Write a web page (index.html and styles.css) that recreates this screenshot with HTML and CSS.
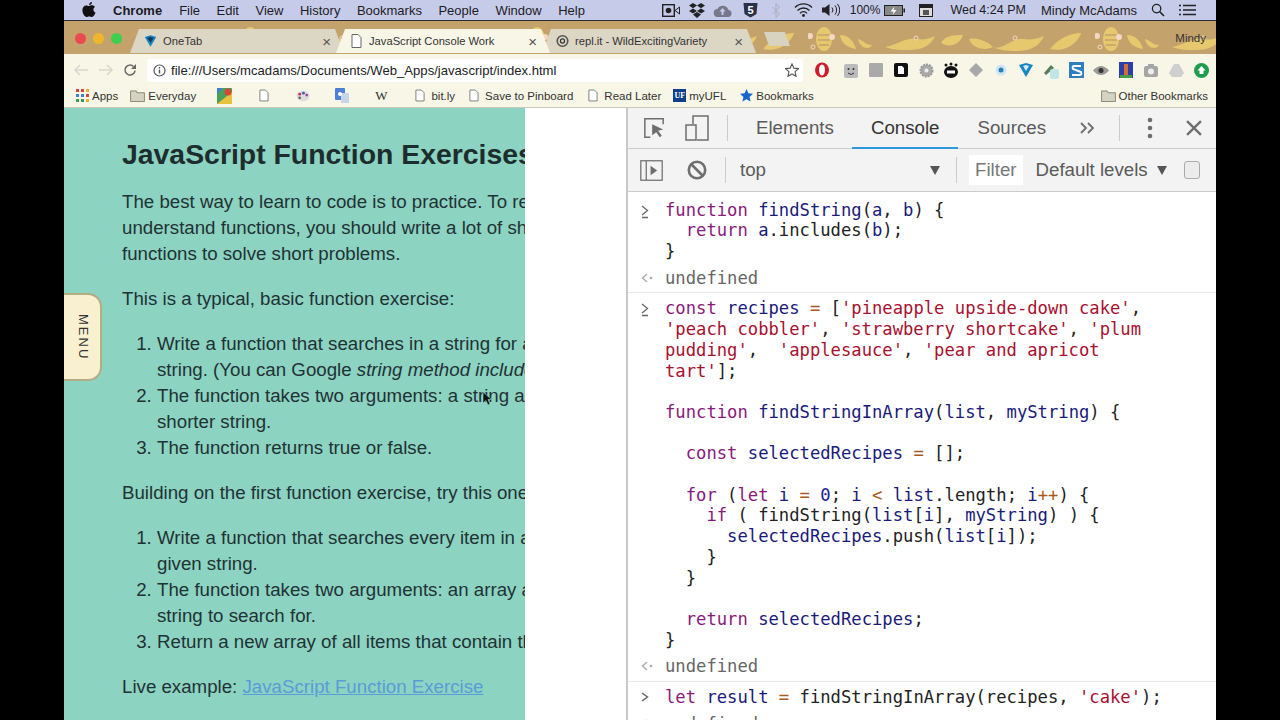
FILE: index.html
```html
<!DOCTYPE html>
<html lang="en">
<head>
  <meta charset="UTF-8" />
  <title>JavaScript Console Work</title>
  <link rel="stylesheet" href="styles.css">
</head>
<body>
<div class="screen">

  <!-- mac menu bar -->
  <div class="menubar">
    <svg class="apple" width="14" height="16" viewBox="0 0 14 16"><path d="M10 0c.1 1.200-.9 2.900-2.900 3.100C6.900 1.500 8.300.2 10 0zM7 4c.8 0 1.700-.7 3-.7 1.100 0 2.300.5 3 1.600-2.300 1.300-2 4.600.6 5.600-.7 1.800-2.200 4.500-3.700 4.500-1 0-1.400-.6-2.700-.6s-1.700.6-2.700.6C2.700 15 .4 11.500.4 8.300.4 5.300 2.300 3.400 4.200 3.400 5.300 3.400 6.200 4 7 4z" fill="#111"/></svg>
    <span class="menu-item menu-app">Chrome</span>
    <span class="menu-item">File</span>
    <span class="menu-item">Edit</span>
    <span class="menu-item">View</span>
    <span class="menu-item">History</span>
    <span class="menu-item">Bookmarks</span>
    <span class="menu-item">People</span>
    <span class="menu-item">Window</span>
    <span class="menu-item">Help</span>
    <div class="menu-right">
      <svg width="18" height="13" viewBox="0 0 18 13"><rect x=".7" y=".7" width="11.600" height="11.600" fill="none" stroke="#222" stroke-width="1.400"/><circle cx="6.500" cy="6.500" r="2.800" fill="#222"/><path d="M13 6.500l4.500-3.500v7z" fill="none" stroke="#222"/></svg>
      <svg class="mr-dropbox" width="16" height="15" viewBox="0 0 16 15"><path d="M4 0l4 2.600L4 5.200 0 2.600zM12 0l4 2.600-4 2.600-4-2.600zM4 5.400L8 8l-4 2.600L0 8zM12 5.400L16 8l-4 2.600L8 8zM4 11.400l4-2.400 4 2.400L8 15z" fill="#222"/></svg>
      <svg class="mr-cloud" width="19" height="13" viewBox="0 0 19 13"><path d="M5 13a4 4 0 0 1-.5-8A6 6 0 0 1 15.500 6a3.500 3.500 0 0 1-1 7z" fill="#77798a"/><path d="M9.500 4l3 3.500h-2V11h-2V7.500h-2z" fill="#c6cbea"/></svg>
      <svg class="mr-shield" width="15" height="16" viewBox="0 0 15 16"><path d="M.5 1h14l-1 11-6 3.500-6-3.500z" fill="#2a3148"/><text x="7.500" y="11.500" class="tiny-five">5</text></svg>
      <svg class="mr-bt" width="8" height="15" viewBox="0 0 8 15"><path d="M.5 4l7 7-3.500 3.500V.5L7.500 4l-7 7" fill="none" stroke="#a8abc0"/></svg>
      <svg class="mr-wifi" width="19" height="14" viewBox="0 0 19 14"><path d="M1 4.500a12 12 0 0 1 17 0M3.500 7.500a8.500 8.500 0 0 1 12 0M6 10.300a4.500 4.500 0 0 1 7 0" fill="none" stroke="#222" stroke-width="1.300"/><circle cx="9.500" cy="12.500" r="1.400" fill="#222"/></svg>
      <svg class="mr-vol" width="18" height="14" viewBox="0 0 18 14"><path d="M0 4.500h3l4.500-3.500v12L3 9.500H0z" fill="#222"/><path d="M10 4.500a4 4 0 0 1 0 5M13 2.500a7 7 0 0 1 0 9M15.500 1a10 10 0 0 1 0 12" fill="none" stroke="#222"/></svg>
      <span class="menu-batt">100%</span>
      <svg class="mr-batt" width="21" height="11" viewBox="0 0 21 11"><rect x=".5" y=".5" width="18" height="10" fill="#888" stroke="#222"/><path d="M10.500 1.500l-4 5h3l-1 3.500 4-5h-3z" fill="#fff"/><rect x="19.500" y="3.500" width="1.500" height="4" fill="#222"/></svg>
      <svg class="mr-kbd" width="14" height="13" viewBox="0 0 14 13"><rect x=".5" y=".5" width="13" height="12" fill="#ddd" stroke="#222"/><rect x="1" y="1" width="12" height="3" fill="#222"/><rect x="4" y="6" width="6" height="5" fill="#555"/></svg>
      <span class="menu-clock">Wed 4:24 PM</span>
      <span class="menu-user">Mindy McAdams</span>
      <svg class="mr-search" width="14" height="14" viewBox="0 0 15 15"><circle cx="6" cy="6" r="4.500" fill="none" stroke="#222" stroke-width="1.400"/><path d="M9.500 9.500l4.500 4.500" stroke="#222" stroke-width="1.600"/></svg>
      <svg class="mr-list" width="17" height="12" viewBox="0 0 17 12"><path d="M4 1.500h13M4 6h13M4 10.500h13" stroke="#222" stroke-width="1.500"/><path d="M0 1.500h2M0 6h2M0 10.500h2" stroke="#222" stroke-width="1.500"/></svg>
    </div>
  </div>

  <!-- browser chrome -->
  <div class="tabstrip">
    <svg class="theme" width="1152" height="33">
      <defs>
        <pattern id="swirl" width="287" height="33" patternUnits="userSpaceOnUse" x="170">
          <ellipse cx="16" cy="18" rx="8" ry="12" fill="#e6c86e"/>
          <path d="M10 14h12M10 19h12M11 24h10" stroke="#c4a26c" stroke-width="1.500"/>
          <path d="M32 14c8 0 14 6 16 14-8-1-15-6-16-14zM50 18c6 2 8 6 14 6-2 5-12 4-14-6zM77 26c12-2 20-10 32-8 6 1 12 0 18-3-4 10-14 14-26 14-8 0-16 0-24-3zM133 22c4-8 14-8 22-8-2 8-12 14-22 8zM161 18c8-2 18 2 24 8-8 4-20 2-24-8zM185 26c10 4 20-10 30-8 8 1 14 0 21-3-4 10-14 15-27 15-10 0-18-1-24-4zM242 28c8-10 20-16 31-16-2 8-14 20-31 16z" fill="#e6c86e"/>
          <circle cx="2" cy="15" r="3" fill="#f3d6c4"/>
          <circle cx="24" cy="16" r="3" fill="#f3d6c4"/>
          <circle cx="5" cy="26" r="2" fill="#c4a26c" stroke="#f3d6c4"/>
          <circle cx="108" cy="17" r="2" fill="#c4a26c" stroke="#f3d6c4"/>
          <circle cx="207" cy="17" r="2" fill="#c4a26c" stroke="#f3d6c4"/>
        </pattern>
      </defs>
      <rect width="1152" height="33" fill="#c4a26c"/>
      <rect x="110" width="1042" height="33" fill="url(#swirl)"/>
    </svg>
    <div class="lights">
      <span class="light light-red"></span>
      <span class="light light-yellow"></span>
      <span class="light light-green"></span>
    </div>
    <div class="tabs">
      <div class="tab">
        <svg class="tab-icon" width="13" height="14" viewBox="0 0 16 16"><path d="M1 3l7-2 7 2-7 12z" fill="#1685c4"/><path d="M4 4l4-1 4 1-4 6z" fill="#0e3a5c"/></svg>
        <span class="tab-title">OneTab</span>
        <span class="tab-close">×</span>
      </div>
      <div class="tab tab-active">
        <svg class="tab-icon" width="13" height="14" viewBox="0 0 12 14"><path d="M1.500.5h6l3 3v10h-9z" fill="#fff" stroke="#666"/></svg>
        <span class="tab-title">JavaScript Console Work</span>
        <span class="tab-close">×</span>
      </div>
      <div class="tab">
        <svg class="tab-icon" width="13" height="14" viewBox="0 0 16 16"><circle cx="8" cy="8" r="6.500" fill="none" stroke="#555" stroke-width="2"/><circle cx="8" cy="8" r="2.500" fill="none" stroke="#333" stroke-width="1.500"/></svg>
        <span class="tab-title">repl.it - WildExcitingVariety</span>
        <span class="tab-close">×</span>
      </div>
      <div class="tab-new"></div>
    </div>
    <span class="profile">Mindy</span>
  </div>

  <div class="toolbar">
    <svg class="nav-arrow" width="16" height="14" viewBox="0 0 16 14"><path d="M15 7H2M7 2L2 7l5 5" fill="none" stroke="#d8d8d0" stroke-width="1.600"/></svg>
    <svg class="nav-arrow" width="16" height="14" viewBox="0 0 16 14"><path d="M1 7h13M9 2l5 5-5 5" fill="none" stroke="#d8d8d0" stroke-width="1.600"/></svg>
    <svg class="nav-reload" width="14" height="14" viewBox="0 0 14 14"><path d="M12 7.500A5 5 0 1 1 10.500 3.500" fill="none" stroke="#666" stroke-width="1.500"/><path d="M13 1v5H8z" fill="#666"/></svg>
    <div class="omnibox">
      <svg width="13" height="13" viewBox="0 0 13 13"><circle cx="6.500" cy="6.500" r="5.500" fill="none" stroke="#555" stroke-width="1.200"/><path d="M6.500 5.500v4M6.500 3v1.400" stroke="#555" stroke-width="1.400"/></svg>
      <span class="url">file:///Users/mcadams/Documents/Web_Apps/javascript/index.html</span>
      <svg class="url-star" width="14" height="14" viewBox="0 0 15 15"><path d="M7.500 1l2 4.500 5 .5-3.700 3.300 1 4.900-4.300-2.500-4.300 2.500 1-4.900L.5 6l5-.5z" fill="none" stroke="#555" stroke-width="1.200"/></svg>
    </div>
    <div class="extensions">
      <svg width="16" height="16" viewBox="0 0 16 16"><ellipse cx="8" cy="8" rx="7" ry="7.500" fill="#d01c28"/><ellipse cx="8" cy="8" rx="3" ry="5.500" fill="#fff"/></svg>
      <svg width="14" height="16" viewBox="0 0 14 16"><rect y="2" width="14" height="14" rx="2" fill="#bbb"/><circle cx="4.500" cy="7" r="1" fill="#333"/><circle cx="9.500" cy="7" r="1" fill="#333"/><path d="M4 11q3 3 6 0" fill="none" stroke="#333"/></svg>
      <svg width="14" height="14" viewBox="0 0 14 14"><rect width="14" height="14" rx="1" fill="#aaa"/></svg>
      <svg width="14" height="14" viewBox="0 0 14 14"><rect width="14" height="14" rx="2" fill="#111"/><path d="M4 3h4l2 2v6H4z" fill="#fff"/></svg>
      <svg width="15" height="15" viewBox="0 0 15 15"><circle cx="7.500" cy="7.500" r="6" fill="#aaa" stroke="#999" stroke-width="2" stroke-dasharray="2 1"/><circle cx="7.500" cy="7.500" r="2" fill="#eee"/></svg>
      <svg width="16" height="16" viewBox="0 0 16 16"><ellipse cx="8" cy="10" rx="7" ry="6" fill="#111"/><circle cx="3" cy="3" r="1.500" fill="#111"/><circle cx="8" cy="2" r="1.500" fill="#111"/><circle cx="13" cy="3" r="1.500" fill="#111"/><rect x="4" y="8.500" width="8" height="3" fill="#fff"/></svg>
      <svg width="14" height="14" viewBox="0 0 14 14"><path d="M7 0l7 7-7 7-7-7z" fill="#a8a8a8"/></svg>
      <svg width="12" height="12" viewBox="0 0 12 12"><circle cx="6" cy="6" r="5.500" fill="#cfe6f4"/><circle cx="6" cy="6" r="2.500" fill="#2a7fb8"/></svg>
      <svg width="14" height="14" viewBox="0 0 14 14"><path d="M0 2l7-2 7 2-7 12z" fill="#1685c4"/><path d="M4 3l3-1 3 1-3 5z" fill="#d8ecf6"/></svg>
      <svg width="16" height="18" viewBox="0 0 16 18"><path d="M1 12l7-8 3 3-8 7z" fill="#5a7a5c"/><rect x="7" y="8" width="9" height="10" rx="2" fill="#bfe6e4"/></svg>
      <svg width="15" height="16" viewBox="0 0 15 16"><rect width="15" height="16" fill="#2d7fc0"/><path d="M12 4H5q-2 0-1 3l8 3q1 3-1 3H3" fill="none" stroke="#fff" stroke-width="2"/></svg>
      <svg width="16" height="11" viewBox="0 0 16 11"><path d="M0 5.500q8-9 16 0-8 9-16 0z" fill="#999"/><circle cx="8" cy="5.500" r="2.500" fill="#333"/></svg>
      <svg width="14" height="16" viewBox="0 0 14 16"><rect width="14" height="16" fill="#2b3fa8"/><rect x="5" y="2" width="4" height="11" fill="#d86a3a"/><rect x="1" y="13" width="12" height="3" fill="#4a9a4a"/></svg>
      <svg width="14" height="13" viewBox="0 0 14 13"><rect y="2" width="14" height="11" rx="2" fill="#a5a5a5"/><rect x="4" width="6" height="3" fill="#a5a5a5"/><circle cx="7" cy="7.500" r="3" fill="#eee"/></svg>
      <svg width="15" height="13" viewBox="0 0 15 13"><path d="M5 0h5l5 9-3 4H3L0 9z" fill="#cfcfcf"/></svg>
      <svg width="15" height="15" viewBox="0 0 15 15"><circle cx="7.500" cy="7.500" r="7.500" fill="#1f9d4d"/><path d="M7.500 3l4 4.500H9.500V11h-4V7.500h-2z" fill="#fff"/></svg>
    </div>
  </div>

  <div class="bookmarks">
    <div class="bm bm-apps">
      <svg width="13" height="13" viewBox="0 0 13 13"><g fill="#d4483c"><rect width="3" height="3"/><rect x="5" width="3" height="3"/></g><rect x="10" width="3" height="3" fill="#e8b030"/><g fill="#3f7fd0"><rect y="5" width="3" height="3"/><rect x="5" y="5" width="3" height="3"/></g><rect x="10" y="5" width="3" height="3" fill="#d4483c"/><g fill="#3a9a58"><rect y="10" width="3" height="3"/><rect x="5" y="10" width="3" height="3"/></g><rect x="10" y="10" width="3" height="3" fill="#e8b030"/></svg>
      <span>Apps</span>
    </div>
    <div class="bm bm-everyday">
      <svg class="folder" width="15" height="12" viewBox="0 0 16 13"><path d="M.5 12.500V1h6l1 2h8v9.500z" fill="#d4d2c2" stroke="#85826e"/></svg>
      <span>Everyday</span>
    </div>
    <svg class="bm-solo bm-maps" width="15" height="16" viewBox="0 0 15 16"><rect width="15" height="16" rx="1" fill="#4aa05a"/><path d="M0 16L15 4v12z" fill="#e8c23c"/><path d="M0 0h6L0 6z" fill="#3f7fd0"/><circle cx="11" cy="4" r="3.500" fill="#d4483c"/></svg>
    <svg class="bm-solo bm-doc-a" width="10" height="13" viewBox="0 0 11 13"><path d="M1 .5h6l3 3v9H1z" fill="#fff" stroke="#777"/></svg>
    <svg class="bm-solo bm-palette" width="14" height="12" viewBox="0 0 15 12"><ellipse cx="7.500" cy="6" rx="7" ry="5.500" fill="#ddd"/><circle cx="4" cy="4" r="1.500" fill="#c03838"/><circle cx="8" cy="3" r="1.500" fill="#3a5ab0"/><circle cx="11.500" cy="5" r="1.500" fill="#a040a0"/><circle cx="4" cy="8" r="1.500" fill="#666"/></svg>
    <svg class="bm-solo bm-translate" width="14" height="15" viewBox="0 0 14 15"><rect width="10" height="12" rx="1" fill="#4a80d8"/><rect x="6" y="5" width="8" height="10" fill="#c8d4e8"/><circle cx="5" cy="6" r="2" fill="#fff"/></svg>
    <span class="bm-solo bm-wiki">W</span>
    <div class="bm bm-bitly">
      <svg class="doc" width="10" height="13" viewBox="0 0 11 13"><path d="M1 .5h6l3 3v9H1z" fill="#fff" stroke="#777"/></svg>
      <span>bit.ly</span>
    </div>
    <div class="bm bm-pinboard">
      <svg class="doc" width="10" height="13" viewBox="0 0 11 13"><path d="M1 .5h6l3 3v9H1z" fill="#fff" stroke="#777"/></svg>
      <span>Save to Pinboard</span>
    </div>
    <div class="bm bm-later">
      <svg class="doc" width="10" height="13" viewBox="0 0 11 13"><path d="M1 .5h6l3 3v9H1z" fill="#fff" stroke="#777"/></svg>
      <span>Read Later</span>
    </div>
    <div class="bm bm-ufl">
      <span class="uf-badge">UF</span>
      <span>myUFL</span>
    </div>
    <div class="bm bm-star">
      <svg width="13" height="13" viewBox="0 0 15 15"><path d="M7.500 0l2.200 5 5.300.5-4 3.600 1.200 5.400-4.700-2.800-4.700 2.800 1.200-5.400-4-3.600L5.300 5z" fill="#1a66d0"/></svg>
      <span>Bookmarks</span>
    </div>
    <div class="bm bm-other">
      <svg class="folder" width="15" height="12" viewBox="0 0 16 13"><path d="M.5 12.500V1h6l1 2h8v9.500z" fill="#d4d2c2" stroke="#85826e"/></svg>
      <span>Other Bookmarks</span>
    </div>
  </div>

  <div class="viewport">
    <!-- the page, cut off by the open devtools -->
    <div class="page-area">
      <div class="page">
        <div class="menu-tab"><span>MENU</span></div>
        <div class="article">
          <h1>JavaScript Function Exercises</h1>
          <p>The best way to learn to code is to practice. To really<br>understand functions, you should write a lot of short<br>functions to solve short problems.</p>
          <p>This is a typical, basic function exercise:</p>
          <ol>
            <li>Write a function that searches in a string for a shorter<br>string. (You can Google <em>string method includes</em>.)</li>
            <li>The function takes two arguments: a string and a<br>shorter string.</li>
            <li>The function returns true or false.</li>
          </ol>
          <p>Building on the first function exercise, try this one:</p>
          <ol>
            <li>Write a function that searches every item in an array for a<br>given string.</li>
            <li>The function takes two arguments: an array and a<br>string to search for.</li>
            <li>Return a new array of all items that contain the string.</li>
          </ol>
          <p>Live example: <a href="#">JavaScript Function Exercise</a></p>
        </div>
      </div>
      <svg class="cursor" width="10" height="15" viewBox="0 0 10 15"><path d="M1 1v11l3-2.500 2 4.500 2-1-2-4.500h3.500z" fill="#111" stroke="#8cd3c1" stroke-width=".6"/></svg>
    </div>

    <div class="devtools">
      <div class="dt-tabs">
        <svg class="dt-inspect" width="22" height="22" viewBox="0 0 24 24"><path d="M8 22H2V2h20v6" fill="none" stroke="#6e6e6e" stroke-width="1.600"/><path d="M10 8l12 5.500-5.500 1.500 4 5.500-2.200 1.500-3.800-5.500-4.500 3.300z" fill="#6e6e6e"/></svg>
        <svg class="dt-device" width="24" height="26" viewBox="0 0 24 26"><path d="M8 9V1h15v24H12" fill="none" stroke="#6e6e6e" stroke-width="1.500"/><rect x="1" y="10" width="10" height="15" fill="none" stroke="#6e6e6e" stroke-width="1.500"/></svg>
        <span class="dt-sep dt-sep-first"></span>
        <span class="dt-tab">Elements</span>
        <span class="dt-tab dt-tab-active">Console</span>
        <span class="dt-tab dt-tab-last">Sources</span>
        <svg class="dt-more" width="14" height="12" viewBox="0 0 14 12"><path d="M1 1l5 5-5 5M8 1l5 5-5 5" fill="none" stroke="#6e6e6e" stroke-width="1.800"/></svg>
        <span class="dt-sep dt-sep-more"></span>
        <svg class="dt-dots" width="6" height="22" viewBox="0 0 6 22"><circle cx="3" cy="3" r="2.300" fill="#6e6e6e"/><circle cx="3" cy="11" r="2.300" fill="#6e6e6e"/><circle cx="3" cy="19" r="2.300" fill="#6e6e6e"/></svg>
        <svg class="dt-close" width="16" height="16" viewBox="0 0 15 15"><path d="M1 1l13 13M14 1L1 14" stroke="#6e6e6e" stroke-width="2.200"/></svg>
      </div>
      <div class="dt-bar">
        <svg class="dt-sidebar" width="23" height="21" viewBox="0 0 24 22"><rect x=".8" y=".8" width="22.400" height="20.400" fill="none" stroke="#6e6e6e" stroke-width="1.300"/><path d="M6.500 1v20" stroke="#6e6e6e" stroke-width="1.300"/><path d="M11 6l7 5-7 5z" fill="#6e6e6e"/></svg>
        <svg class="dt-clear" width="20" height="20" viewBox="0 0 20 20"><circle cx="10" cy="10" r="8.200" fill="none" stroke="#6e6e6e" stroke-width="2.600"/><path d="M4 4l12 12" stroke="#6e6e6e" stroke-width="2.600"/></svg>
        <span class="dt-sep dt-sep-bar"></span>
        <span class="dt-context">top</span>
        <span class="dt-caret"></span>
        <span class="dt-sep dt-sep-filter"></span>
        <span class="dt-filter">Filter</span>
        <span class="dt-levels">Default levels</span>
        <span class="dt-caret"></span>
        <span class="dt-check"></span>
      </div>
      <div class="console">
        <div class="msg msg-first">
          <span class="prompt"><svg width="8" height="14" viewBox="0 0 8 14"><path d="M1 1l5.500 4.500L1 10M1 12.500h6" fill="none" stroke="#666" stroke-width="1.300"/></svg></span>
<pre><span class="kw">function</span> <span class="def">findString</span>(<span class="def">a</span>, <span class="def">b</span>) {
  <span class="kw">return</span> <span class="def">a</span>.includes(<span class="def">b</span>);
}</pre>
        </div>
        <div class="msg msg-result">
          <span class="prompt"><svg width="12" height="10" viewBox="0 0 12 10"><path d="M6 1L1.500 5 6 9" fill="none" stroke="#aaa" stroke-width="1.400"/><circle cx="10" cy="5" r="1.300" fill="#aaa"/></svg></span>
          <pre class="undef">undefined</pre>
        </div>
        <div class="msg">
          <span class="prompt"><svg width="8" height="14" viewBox="0 0 8 14"><path d="M1 1l5.500 4.500L1 10M1 12.500h6" fill="none" stroke="#666" stroke-width="1.300"/></svg></span>
<pre><span class="kw">const</span> <span class="def">recipes</span> <span class="op">=</span> [<span class="str">'pineapple upside-down cake'</span>,
<span class="str">'peach cobbler'</span>, <span class="str">'strawberry shortcake'</span>, <span class="str">'plum
pudding'</span>,  <span class="str">'applesauce'</span>, <span class="str">'pear and apricot
tart'</span>];

<span class="kw">function</span> <span class="def">findStringInArray</span>(<span class="def">list</span>, <span class="def">myString</span>) {

  <span class="kw">const</span> <span class="def">selectedRecipes</span> <span class="op">=</span> [];

  <span class="kw">for</span> (<span class="kw">let</span> <span class="def">i</span> <span class="op">=</span> <span class="num">0</span>; <span class="def">i</span> <span class="op">&lt;</span> <span class="def">list</span>.length; <span class="def">i</span><span class="op">++</span>) {
    <span class="kw">if</span> ( findString(<span class="def">list</span>[<span class="def">i</span>], <span class="def">myString</span>) ) {
      <span class="def">selectedRecipes</span>.push(<span class="def">list</span>[<span class="def">i</span>]);
    }
  }

  <span class="kw">return</span> <span class="def">selectedRecipes</span>;
}</pre>
        </div>
        <div class="msg msg-result">
          <span class="prompt"><svg width="12" height="10" viewBox="0 0 12 10"><path d="M6 1L1.500 5 6 9" fill="none" stroke="#aaa" stroke-width="1.400"/><circle cx="10" cy="5" r="1.300" fill="#aaa"/></svg></span>
          <pre class="undef">undefined</pre>
        </div>
        <div class="msg">
          <span class="prompt"><svg width="8" height="10" viewBox="0 0 8 10"><path d="M1 1l5.500 4L1 9" fill="none" stroke="#666" stroke-width="1.500"/></svg></span>
<pre><span class="kw">let</span> <span class="def">result</span> <span class="op">=</span> findStringInArray(recipes, <span class="str">'cake'</span>);</pre>
        </div>
        <div class="msg msg-result">
          <span class="prompt"><svg width="12" height="10" viewBox="0 0 12 10"><path d="M6 1L1.500 5 6 9" fill="none" stroke="#aaa" stroke-width="1.400"/><circle cx="10" cy="5" r="1.300" fill="#aaa"/></svg></span>
          <pre class="undef">undefined</pre>
        </div>
      </div>
    </div>
  </div>
</div>
</body>
</html>
```
FILE: styles.css
```css
html, body {
  margin: 0;
  height: 100%;
  background: #000;
  overflow: hidden;
}

.screen {
  width: 1152px;
  height: 720px;
  margin-left: 64px;
  display: flex;
  flex-direction: column;
  overflow: hidden;
  font-family: "Liberation Sans", sans-serif;
  background: #fff;
}

/* menu bar */
.menubar {
  height: 20px;
  flex: none;
  display: flex;
  align-items: center;
  padding-left: 18px;
  background: #c6cbea;
  font-size: 13px;
  color: #1c1c24;
}
.apple { margin-right: 17px; }
.menu-item { margin-right: 16.500px; }
.menu-app { font-weight: bold; margin-right: 17px; }
.menu-right {
  margin-left: auto;
  margin-right: 20px;
  display: flex;
  align-items: center;
}
.menu-right svg { flex: none; }
.mr-dropbox { margin-left: 9px; }
.mr-cloud { margin-left: 8px; }
.mr-shield { margin-left: 11px; }
.mr-bt { margin-left: 14px; }
.mr-wifi { margin-left: 14px; }
.mr-vol { margin-left: 9px; }
.mr-batt { margin-left: 4px; }
.mr-kbd { margin-left: 14px; }
.mr-search { margin-left: 14px; }
.mr-list { margin-left: 14px; }
.tiny-five { font: bold 11px "Liberation Sans", sans-serif; fill: #fff; text-anchor: middle; }
.menu-batt { font-size: 12px; margin-left: 10px; }
.menu-clock { font-size: 12.500px; margin-left: 17px; }
.menu-user { margin-left: 15px; }

/* tabs */
.tabstrip {
  height: 33px;
  flex: none;
  position: relative;
  display: flex;
  align-items: flex-end;
  background: #c4a26c;
  border-top: 1px solid #2c2c38;
  box-sizing: border-box;
}
.theme { position: absolute; left: 0; top: 0; }
.lights {
  position: relative;
  display: flex;
  gap: 7px;
  align-self: flex-start;
  margin: 12px 0 0 11px;
}
.light { width: 11px; height: 11px; border-radius: 50%; }
.light-red { background: #ea4b4e; }
.light-yellow { background: #eeb62f; }
.light-green { background: #3fcf4e; }
.tabs {
  position: relative;
  display: flex;
  align-items: flex-end;
  margin-left: 8px;
}
.tab {
  width: 214px;
  height: 24px;
  margin-right: -8px;
  padding: 0 13px 0 14px;
  box-sizing: border-box;
  display: flex;
  align-items: center;
  background: #dcd6c4;
  clip-path: polygon(0 100%, 9px 0, calc(100% - 9px) 0, 100% 100%);
  font-size: 11.200px;
  color: #333;
}
.tab-active { background: #f8f6e6; z-index: 1; }
.tab-icon { flex: none; margin-right: 6px; }
.tab-title { flex: 1; white-space: nowrap; overflow: hidden; }
.tab-close { font-size: 15px; color: #555; }
.tab-new {
  width: 26px;
  height: 14px;
  margin: 0 0 7px 16px;
  background: #d8d2c0;
  clip-path: polygon(0 0, 80% 0, 100% 100%, 20% 100%);
}
.profile {
  position: absolute;
  right: 10px;
  top: 11px;
  font-size: 11.500px;
  color: #333;
}

/* toolbar */
.toolbar {
  height: 31px;
  flex: none;
  display: flex;
  align-items: center;
  background: #f8f6e6;
  padding: 3px 0 0 9px;
  box-sizing: border-box;
}
.nav-arrow { margin-right: 9px; flex: none; }
.nav-reload { margin: 0 10px 0 0; flex: none; }
.omnibox {
  width: 656px;
  height: 23px;
  flex: none;
  display: flex;
  align-items: center;
  gap: 5px;
  padding: 0 4px 0 6px;
  box-sizing: border-box;
  background: #fff;
  border-radius: 3px;
}
.url { font-size: 13.100px; color: #222; flex: 1; }
.extensions {
  display: grid;
  grid-auto-flow: column;
  grid-auto-columns: 25px;
  justify-items: center;
  align-items: center;
  margin-left: 10.500px;
}
.extensions svg:first-child { margin-right: 8px; }

/* bookmarks */
.bookmarks {
  height: 24px;
  flex: none;
  display: flex;
  align-items: center;
  background: #f8f6e6;
  border-bottom: 1px solid #c8c8bc;
  box-sizing: border-box;
  font-size: 11.500px;
  color: #333;
  padding-left: 12px;
}
.bm { display: flex; align-items: center; gap: 3px; white-space: nowrap; flex: none; }
.bm .doc { margin-right: 3px; }
.bm-solo { flex: none; }
.bm-everyday { margin-left: 12px; }
.bm-maps { margin-left: 21px; }
.bm-doc-a { margin-left: 27px; }
.bm-palette { margin-left: 27px; }
.bm-translate { margin-left: 25px; }
.bm-wiki { margin-left: 26px; font: 13px "Liberation Serif", serif; }
.bm-bitly { margin-left: 28px; }
.bm-pinboard { margin-left: 14px; }
.bm-later { margin-left: 15px; }
.bm-ufl { margin-left: 12px; }
.bm-star { margin-left: 14px; }
.bm-other { margin-left: auto; margin-right: 8px; }
.uf-badge {
  width: 13px;
  height: 13px;
  background: #0e3f8a;
  color: #fff;
  font: bold 8px/13px "Liberation Serif", serif;
  text-align: center;
}

/* page + devtools */
.viewport {
  flex: 1;
  display: flex;
  min-height: 0;
}
.page-area {
  width: 562px;
  flex: none;
  background: #fff;
  position: relative;
  overflow: hidden;
}
.page {
  width: 461px;
  height: 100%;
  background: #8cd3c1;
  position: relative;
  overflow: hidden;
  color: #1f3234;
}
.article {
  width: 480px;
  padding-left: 58px;
  font-size: 18.700px;
  line-height: 26px;
  white-space: nowrap;
}
.article h1 {
  font-size: 28.400px;
  line-height: 32px;
  margin: 30px 0 19px;
  color: #1d2d2d;
}
.article p { margin: 0 0 19px; }
.article ol { margin: 0 0 19px; padding-left: 35px; }
.article a { color: #5a9cd8; }
.menu-tab {
  position: absolute;
  left: 0;
  top: 185px;
  width: 38px;
  height: 88px;
  padding-left: 3px;
  box-sizing: border-box;
  display: flex;
  align-items: center;
  justify-content: center;
  background: #f8f0cf;
  border: 2px solid #b4ad84;
  border-left: none;
  border-radius: 0 14px 14px 0;
}
.menu-tab span {
  writing-mode: vertical-rl;
  font-size: 13px;
  letter-spacing: 2px;
  color: #333;
}
.cursor { position: absolute; left: 418px; top: 283px; }

.devtools {
  flex: 1;
  display: flex;
  flex-direction: column;
  min-width: 0;
  border-left: 2px solid #c8c8c8;
  color: #5a5a5a;
}
.dt-tabs {
  height: 41px;
  flex: none;
  display: flex;
  align-items: center;
  background: #f3f3f3;
  border-bottom: 1px solid #ccc;
  box-sizing: border-box;
  font-size: 18.700px;
}
.dt-inspect { margin-left: 15px; flex: none; }
.dt-device { margin-left: 20px; flex: none; }
.dt-sep { width: 1px; height: 26px; background: #ccc; flex: none; }
.dt-sep-first { margin: 0 28px 0 18px; }
.dt-tab { margin-right: 37px; height: 100%; display: flex; align-items: center; position: relative; }
.dt-tab-last { margin-right: 34px; }
.dt-tab-active { color: #333; margin-right: 38px; }
.dt-tab-active::after {
  content: "";
  position: absolute;
  left: -19px;
  right: -19px;
  bottom: -1px;
  height: 2px;
  background: #2c9ade;
}
.dt-more { flex: none; }
.dt-sep-more { margin: 0 27px 0 25px; }
.dt-close { margin-left: 33px; flex: none; }
.dt-bar {
  height: 43px;
  flex: none;
  display: flex;
  align-items: center;
  background: #f3f3f3;
  border-bottom: 1px solid #ccc;
  box-sizing: border-box;
  font-size: 18.700px;
}
.dt-sidebar { margin-left: 12px; flex: none; }
.dt-clear { margin-left: 24px; flex: none; }
.dt-sep-bar { margin: 0 14px 0 18px; }
.dt-context { width: 190px; }
.dt-caret {
  width: 0;
  height: 0;
  border: 5.500px solid transparent;
  border-top: 9px solid #555;
  border-bottom: none;
  flex: none;
}
.dt-sep-filter { margin: 0 12px 0 16px; }
.dt-filter {
  padding: 5px 6px;
  background: #fff;
  color: #777;
  line-height: 20px;
}
.dt-levels { margin: 0 9px 0 13px; }
.dt-check {
  width: 16px;
  height: 18px;
  margin-left: 17px;
  border: 1px solid #aaa;
  border-radius: 3px;
  box-sizing: border-box;
  background: #ececec;
  flex: none;
}

/* console */
.console {
  flex: 1;
  min-height: 0;
  overflow: hidden;
  background: #fff;
}
.msg {
  display: flex;
  padding-top: 5.500px;
}
.msg-first { padding-top: 7.600px; }
.msg pre {
  margin: 0;
  font: 17.200px/20.700px "DejaVu Sans Mono", monospace;
  color: #222;
}
.prompt {
  width: 37px;
  flex: none;
  padding: 5px 0 0 13px;
  box-sizing: border-box;
}
.prompt svg { display: block; }
.msg-result {
  padding: 6px 0 3.500px;
  border-bottom: 1px solid #e8e8e8;
}
.msg .undef { color: #666; }
.kw { color: #8a1a7a; }
.def { color: #1a1a7a; }
.str { color: #a81030; }
.op { color: #a85a20; }
.num { color: #1a1a9a; }
```
